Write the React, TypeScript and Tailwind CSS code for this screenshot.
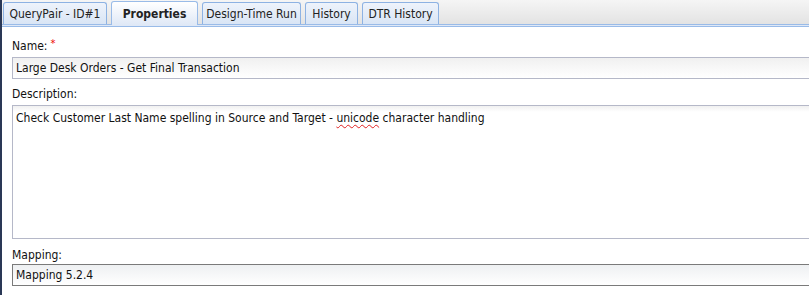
const font = { fontFamily: '"DejaVu Sans Condensed", "DejaVu Sans", Tahoma, sans-serif' };

const tabs = [
  { label: 'QueryPair - ID#1', w: 'w-[104px]' },
  { label: 'Properties', w: 'w-[87px]', active: true },
  { label: 'Design-Time Run', w: 'w-[99px]' },
  { label: 'History', w: 'w-[53px]' },
  { label: 'DTR History', w: 'w-[77px]' },
];

function Tab({ label, w, active }: { label: string; w: string; active?: boolean }) {
  if (active) {
    return (
      <div className={`${w} relative -mb-[1px] h-[24px] rounded-t-[3px] border border-b-0 border-[#99bbe8] bg-gradient-to-b from-white to-[#dfe8f6] flex items-center justify-center text-[12px] font-bold text-[#222] z-10`}>
        {label}
      </div>
    );
  }
  return (
    <div className={`${w} h-[22px] rounded-t-[3px] border border-b-0 border-[#8db2e3] bg-gradient-to-b from-[#eef3fb] to-[#d9e5f5] flex items-center justify-center text-[12px] text-[#222]`}>
      {label}
    </div>
  );
}

export default function App() {
  return (
    <div className="w-[809px] h-[295px] overflow-hidden flex bg-white" style={font}>
      <div className="w-[2px] shrink-0 bg-[#2a3856]" />
      <div className="flex-1 flex flex-col min-w-0">
        <div className="h-[25px] shrink-0 flex items-end gap-[4px] pl-[1px] bg-gradient-to-b from-[#f5f5f5] to-[#e3e3e3] border-b border-[#99bbe8]">
          {tabs.map((t) => (
            <Tab key={t.label} label={t.label} w={t.w} active={t.active} />
          ))}
        </div>
        <div className="h-[2px] shrink-0 bg-[#dfe8f6] border-b border-[#99bbe8]" />
        <div className="flex flex-col pl-[10px] pt-[11px] w-[900px] text-[12px] text-[#111]">
          <div className="h-[16px] flex items-center">
            Name:<span className="ml-[3px] text-[#e00] text-[11px] -mt-[3px]">*</span>
          </div>
          <div className="mt-[3px] h-[22px] border border-[#b5b8c8] bg-gradient-to-b from-[#f0f0f0] to-white flex items-center px-[3px]">
            Large Desk Orders - Get Final Transaction
          </div>
          <div className="mt-[7px] h-[16px] flex items-center">Description:</div>
          <div className="mt-[3px] h-[134px] border border-[#b5b8c8] bg-gradient-to-b from-[#f0f0f0] to-white to-[6px] px-[3px] pt-[3px]">
            Check Customer Last Name spelling in Source and Target -{' '}
            <span className="underline decoration-wavy decoration-[#e02020] decoration-[1px] underline-offset-2">unicode</span>{' '}
            character handling
          </div>
          <div className="mt-[8px] h-[16px] flex items-center">Mapping:</div>
          <div className="mt-[1px] h-[22px] border border-[#7a7a7a] bg-gradient-to-b from-[#eef0f2] to-white flex items-center px-[3px]">
            Mapping 5.2.4
          </div>
        </div>
      </div>
    </div>
  );
}
